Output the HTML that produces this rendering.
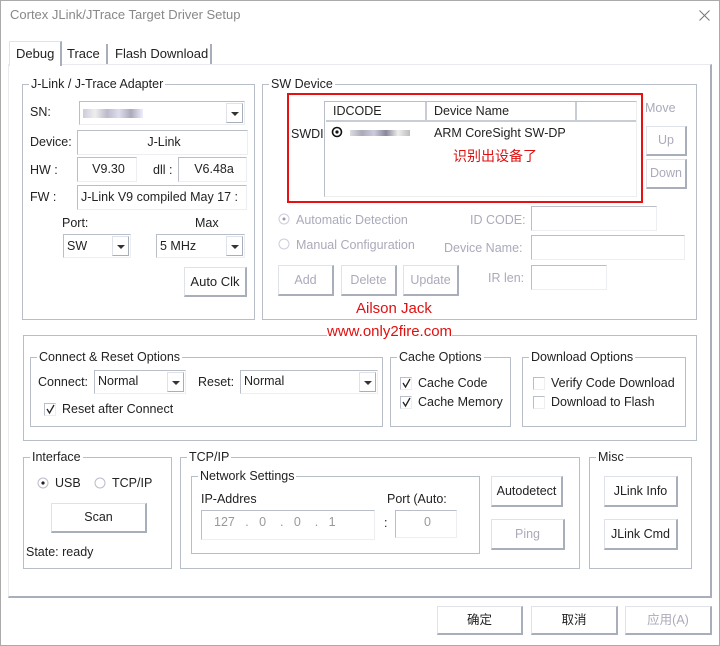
<!DOCTYPE html>
<html><head><meta charset="utf-8"><style>
*{box-sizing:border-box;margin:0;padding:0}
body{width:720px;height:646px;background:#fff;font-family:"Liberation Sans","Noto Sans CJK SC",sans-serif;font-size:12.5px;color:#222;position:relative;overflow:hidden}
.a{position:absolute;white-space:nowrap}
.win{left:0;top:0;width:720px;height:646px;border:1px solid #aaa}
.g{position:absolute;border:1px solid #b8bec8}
.g>.t{position:absolute;top:-9px;left:6px;background:#fff;padding:0 2px;line-height:16px}
.f{position:absolute;border:1px solid #eceef2;border-top-color:#b9bec8;border-left-color:#b9bec8;background:#fff;line-height:22px;padding-left:3px}
.btn{position:absolute;border:1px solid #dfe2e8;border-right:2px solid #a8afbb;border-bottom:2px solid #a8afbb;background:#fff;text-align:center}
.dis{color:#aab}
.dd{position:absolute;right:1px;top:1px;bottom:1px;width:17px;border:1px solid #dfe2e8;border-right-color:#a8afbb;border-bottom-color:#a8afbb}
.dd:after{content:"";position:absolute;left:4px;top:8px;border:4px solid transparent;border-top:4px solid #333;border-bottom:0}
.cb{position:absolute;width:12px;height:13px;border:1px solid #b9bec8;border-right-color:#eee;border-bottom-color:#eee}
.red{color:#e01010}
</style></head><body>
<div class="a win"></div>
<div class="a" style="left:10px;top:7px;color:#888;font-size:13px">Cortex JLink/JTrace Target Driver Setup</div>
<svg class="a" style="left:699px;top:10px" width="11" height="11"><path d="M0.5 0.5L10.5 10.5M10.5 0.5L0.5 10.5" stroke="#777" stroke-width="1"/></svg>

<!-- page -->
<div class="a" style="left:8px;top:64px;width:704px;height:534px;border:1px solid #e8eaf0;border-right:2px solid #a8afbb;border-bottom:2px solid #a8afbb"></div>
<div class="a" style="left:9px;top:41px;width:53px;height:25px;border:1px solid #e0e2e8;border-bottom:none;border-right:2px solid #a8afbb;background:#fff;padding:4px 0 0 6px;font-size:13px">Debug</div>
<div class="a" style="left:62px;top:44px;width:46px;height:20px;border-right:2px solid #a8afbb;padding:2px 0 0 5px;font-size:13px">Trace</div>
<div class="a" style="left:108px;top:44px;width:104px;height:20px;border-right:2px solid #a8afbb;padding:2px 0 0 7px;font-size:13px">Flash Download</div>

<!-- JLink adapter -->
<div class="g" style="left:22px;top:84px;width:233px;height:236px"><span class="t">J-Link / J-Trace Adapter</span></div>
<div class="a" style="left:30px;top:105px">SN:</div>
<div class="f" style="left:79px;top:101px;width:166px;height:24px"><span style="display:inline-block;width:60px;height:9px;margin-top:7px;background:linear-gradient(90deg,#ccd,#eee,#bbc,#dde,#aab,#eef)"></span><div class="dd"></div></div>
<div class="a" style="left:30px;top:135px">Device:</div>
<div class="f" style="left:77px;top:130px;width:171px;height:25px;text-align:center">J-Link</div>
<div class="a" style="left:30px;top:163px">HW :</div>
<div class="f" style="left:77px;top:157px;width:60px;height:25px;text-align:center">V9.30</div>
<div class="a" style="left:153px;top:163px">dll :</div>
<div class="f" style="left:178px;top:157px;width:69px;height:25px;text-align:center">V6.48a</div>
<div class="a" style="left:30px;top:190px">FW :</div>
<div class="f" style="left:77px;top:185px;width:170px;height:25px;overflow:hidden">J-Link V9 compiled May 17 :</div>
<div class="a" style="left:62px;top:216px">Port:</div>
<div class="a" style="left:195px;top:216px">Max</div>
<div class="f" style="left:63px;top:234px;width:68px;height:24px">SW<div class="dd"></div></div>
<div class="f" style="left:156px;top:234px;width:89px;height:24px">5 MHz<div class="dd"></div></div>
<div class="btn" style="left:184px;top:267px;width:63px;height:30px;line-height:27px;font-size:13px">Auto Clk</div>

<!-- SW Device -->
<div class="g" style="left:262px;top:84px;width:435px;height:236px"><span class="t">SW Device</span></div>
<div class="a" style="left:287px;top:93px;width:356px;height:110px;border:2px solid #e81010"></div>
<div class="a" style="left:291px;top:127px">SWDI</div>
<div class="a" style="left:324px;top:101px;width:313px;height:96px;border:1px solid #b9bec8;border-right-color:#eee;border-bottom-color:#eee"></div>
<div class="a" style="left:326px;top:102px;width:101px;height:20px;border-right:2px solid #c8ccd4;border-bottom:2px solid #c8ccd4;padding:2px 0 0 7px">IDCODE</div>
<div class="a" style="left:427px;top:102px;width:150px;height:20px;border-right:2px solid #c8ccd4;border-bottom:2px solid #c8ccd4;padding:2px 0 0 7px">Device Name</div>
<div class="a" style="left:577px;top:102px;width:59px;height:20px;border-bottom:2px solid #c8ccd4"></div>
<svg class="a" style="left:331px;top:126px" width="12" height="12"><circle cx="6" cy="6" r="4.5" fill="none" stroke="#111" stroke-width="1.6"/><circle cx="6" cy="6" r="1.6" fill="#111"/></svg>
<div class="a" style="left:350px;top:130px;width:60px;height:6px;background:linear-gradient(90deg,#ddd,#aab,#ccd,#889,#eee,#bbb)"></div>
<div class="a" style="left:434px;top:126px">ARM CoreSight SW-DP</div>
<div class="a red" style="left:453px;top:146px;font-size:14px">识别出设备了</div>
<div class="a dis" style="left:645px;top:101px">Move</div>
<div class="btn dis" style="left:646px;top:126px;width:41px;height:30px;line-height:27px">Up</div>
<div class="btn dis" style="left:646px;top:159px;width:41px;height:30px;line-height:27px">Down</div>
<svg class="a" style="left:278px;top:213px" width="12" height="12"><circle cx="6" cy="6" r="5" fill="none" stroke="#ccd" /><circle cx="6" cy="6" r="1.5" fill="#99a"/></svg>
<div class="a dis" style="left:296px;top:213px">Automatic Detection</div>
<svg class="a" style="left:278px;top:238px" width="12" height="12"><circle cx="6" cy="6" r="5" fill="none" stroke="#ccd"/></svg>
<div class="a dis" style="left:296px;top:238px">Manual Configuration</div>
<div class="a dis" style="left:470px;top:213px">ID CODE:</div>
<div class="f" style="left:531px;top:206px;width:126px;height:25px"></div>
<div class="a dis" style="left:444px;top:241px">Device Name:</div>
<div class="f" style="left:531px;top:235px;width:154px;height:25px"></div>
<div class="a dis" style="left:488px;top:271px">IR len:</div>
<div class="f" style="left:531px;top:265px;width:76px;height:25px"></div>
<div class="btn dis" style="left:278px;top:265px;width:56px;height:31px;line-height:28px">Add</div>
<div class="btn dis" style="left:341px;top:265px;width:56px;height:31px;line-height:28px">Delete</div>
<div class="btn dis" style="left:403px;top:265px;width:56px;height:31px;line-height:28px">Update</div>
<div class="a red" style="left:356px;top:300px;font-size:15px">Ailson Jack</div>

<!-- big box -->
<div class="g" style="left:23px;top:335px;width:674px;height:106px"></div>
<div class="a red" style="left:327px;top:323px;font-size:15px;background:#fff">www.only2fire.com</div>
<div class="g" style="left:30px;top:357px;width:353px;height:70px"><span class="t">Connect &amp; Reset Options</span></div>
<div class="a" style="left:38px;top:375px">Connect:</div>
<div class="f" style="left:94px;top:370px;width:92px;height:24px;line-height:20px">Normal<div class="dd"></div></div>
<div class="a" style="left:198px;top:375px">Reset:</div>
<div class="f" style="left:240px;top:370px;width:138px;height:24px;line-height:20px">Normal<div class="dd"></div></div>
<div class="cb" style="left:44px;top:403px"></div><svg class="a" style="left:45px;top:404px" width="11" height="11"><path d="M2 5L4.5 9L9 1" fill="none" stroke="#222" stroke-width="1.3"/></svg>
<div class="a" style="left:62px;top:402px">Reset after Connect</div>
<div class="g" style="left:390px;top:357px;width:121px;height:70px"><span class="t">Cache Options</span></div>
<div class="cb" style="left:400px;top:377px"></div><svg class="a" style="left:401px;top:378px" width="11" height="11"><path d="M2 5L4.5 9L9 1" fill="none" stroke="#222" stroke-width="1.3"/></svg>
<div class="a" style="left:418px;top:376px">Cache Code</div>
<div class="cb" style="left:400px;top:396px"></div><svg class="a" style="left:401px;top:397px" width="11" height="11"><path d="M2 5L4.5 9L9 1" fill="none" stroke="#222" stroke-width="1.3"/></svg>
<div class="a" style="left:418px;top:395px">Cache Memory</div>
<div class="g" style="left:522px;top:357px;width:164px;height:70px"><span class="t">Download Options</span></div>
<div class="cb" style="left:533px;top:377px"></div>
<div class="a" style="left:551px;top:376px">Verify Code Download</div>
<div class="cb" style="left:533px;top:396px"></div>
<div class="a" style="left:551px;top:395px">Download to Flash</div>

<!-- Interface -->
<div class="g" style="left:23px;top:457px;width:149px;height:112px"><span class="t">Interface</span></div>
<svg class="a" style="left:37px;top:477px" width="12" height="12"><circle cx="6" cy="6" r="5" fill="none" stroke="#bbc"/><circle cx="6" cy="6" r="1.6" fill="#222"/></svg>
<div class="a" style="left:55px;top:476px">USB</div>
<svg class="a" style="left:94px;top:477px" width="12" height="12"><circle cx="6" cy="6" r="5" fill="none" stroke="#bbc"/></svg>
<div class="a" style="left:112px;top:476px">TCP/IP</div>
<div class="btn" style="left:51px;top:503px;width:96px;height:30px;line-height:27px">Scan</div>
<div class="a" style="left:26px;top:545px">State: ready</div>

<div class="g" style="left:180px;top:457px;width:400px;height:112px"><span class="t">TCP/IP</span></div>
<div class="g" style="left:191px;top:476px;width:289px;height:78px"><span class="t">Network Settings</span></div>
<div class="a" style="left:201px;top:492px">IP-Addres</div>
<div class="a" style="left:387px;top:492px">Port (Auto:</div>
<div class="f" style="left:201px;top:510px;width:174px;height:30px;color:#999;padding-left:12px;line-height:22px;word-spacing:0">127&nbsp;&nbsp;&nbsp;.&nbsp;&nbsp;&nbsp;0&nbsp;&nbsp;&nbsp;&nbsp;.&nbsp;&nbsp;&nbsp;0&nbsp;&nbsp;&nbsp;&nbsp;.&nbsp;&nbsp;&nbsp;1</div>
<div class="a" style="left:384px;top:516px">:</div>
<div class="f" style="left:395px;top:510px;width:62px;height:28px;color:#999;text-align:center;line-height:22px">0</div>
<div class="btn" style="left:491px;top:476px;width:72px;height:31px;line-height:28px">Autodetect</div>
<div class="btn dis" style="left:491px;top:519px;width:74px;height:31px;line-height:28px">Ping</div>

<div class="g" style="left:589px;top:457px;width:103px;height:112px"><span class="t">Misc</span></div>
<div class="btn" style="left:604px;top:476px;width:74px;height:31px;line-height:28px">JLink Info</div>
<div class="btn" style="left:604px;top:519px;width:74px;height:31px;line-height:28px">JLink Cmd</div>

<div class="btn" style="left:437px;top:606px;width:86px;height:29px;line-height:26px">确定</div>
<div class="btn" style="left:531px;top:606px;width:87px;height:29px;line-height:26px">取消</div>
<div class="btn dis" style="left:625px;top:606px;width:87px;height:29px;line-height:26px">应用(A)</div>
</body></html>
